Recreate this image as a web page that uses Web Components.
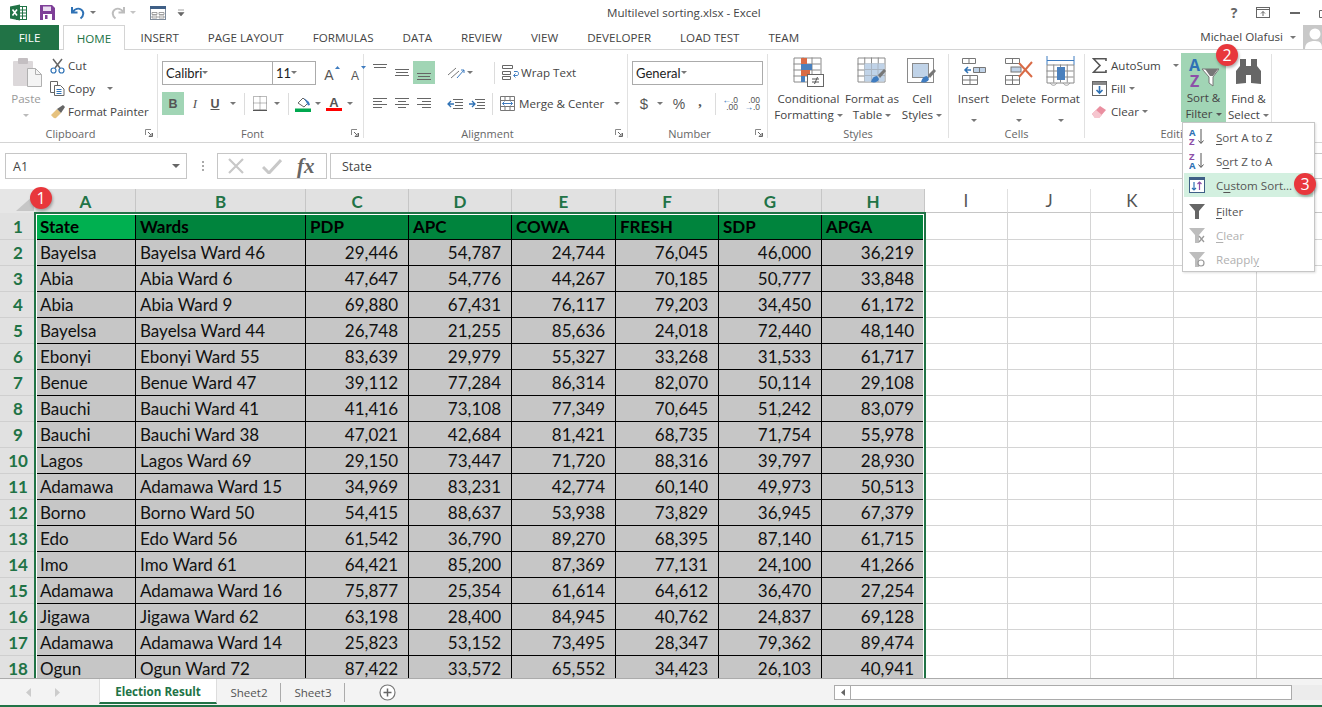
<!DOCTYPE html>
<html>
<head>
<meta charset="utf-8">
<title>Multilevel sorting.xlsx - Excel</title>
<style>
  html, body { margin: 0; padding: 0; width: 1322px; height: 707px; overflow: hidden; background: #fff; }
  body { font-family: "Open Sans", "Noto Sans", sans-serif; position: relative; }
</style>
</head>
<body>
<xl-titlebar></xl-titlebar>
<xl-tabs></xl-tabs>
<xl-ribbon></xl-ribbon>
<xl-formula></xl-formula>
<xl-sheet></xl-sheet>
<xl-sheetbar></xl-sheetbar>
<xl-sortmenu></xl-sortmenu>
<xl-step n="1" style="left:30px;top:187px"></xl-step>
<xl-step n="2" style="left:1216px;top:44px"></xl-step>
<xl-step n="3" style="left:1294px;top:173px"></xl-step>

<script>
// small helper for the inline icons
const svg = (w, h, inner, extra = '') =>
  `<svg width="${w}" height="${h}" viewBox="0 0 ${w} ${h}" style="display:block;flex:none;${extra}">${inner}</svg>`;

// title bar
class XlTitlebar extends HTMLElement {
  constructor() {
    super();
    this.attachShadow({ mode: 'open' });
    this.shadowRoot.innerHTML = `
      <style>
        :host { display: flex; align-items: center; height: 25px; position: relative; color: #444; }
        .title { position: absolute; left: 607px; top: 4px; font-size: 11.6px; line-height: 18px; color: #444; white-space: nowrap; }
        .q { display: flex; align-items: center; }
        .right { margin-left: auto; display: flex; align-items: center; }
        .c { width: 0; height: 0; border: 3px solid transparent; border-top: 3px solid #777; border-bottom: 0; }
      </style>
      <div class="q">
        <span style="width:10px"></span>
        ${svg(17, 17, `<rect x="6.5" y="2.5" width="10" height="13" fill="#fff" stroke="#217346"/>
          <path d="M10 6h6M10 9h6M10 12h6M12.5 3v12" stroke="#217346" fill="none"/>
          <path d="M0 2.5 10 .5v16L0 14.500z" fill="#217346"/>
          <path d="M2.500 5.500 7 11.500M7 5.500 2.500 11.500" stroke="#fff" stroke-width="1.600" fill="none"/>`)}
        <span style="width:13px"></span>
        ${svg(15, 15, `<path d="M0 0h12l3 3v12H0z" fill="#7e3f98"/><rect x="3" y="1.500" width="8" height="4.500" fill="#e9dcef"/><rect x="3" y="9" width="9" height="6" fill="#fff"/><rect x="5" y="10" width="2.500" height="4" fill="#7e3f98"/>`)}
        <span style="width:14px"></span>
        ${svg(16, 15, `<path d="M3 2v5.500h5.500M3.500 7C6 3.800 9.500 3 12 4.500c3.200 2 3 6.500-.5 9" fill="none" stroke="#2f72b5" stroke-width="2"/>`)}
        <span style="width:5px"></span><i class="c"></i>
        <span style="width:15px"></span>
        ${svg(16, 15, `<path d="M13 2v5.500H7.500M12.500 7C10 3.800 6.500 3 4 4.500c-3.200 2-3 6.500.5 9" fill="none" stroke="#bdbdbd" stroke-width="2"/>`)}
        <span style="width:3px"></span><i class="c" style="border-top-color:#c4c4c4"></i>
        <span style="width:14px"></span>
        ${svg(16, 14, `<rect x=".5" y=".5" width="15" height="13" fill="#fff" stroke="#7f8c9c"/><rect width="16" height="3" fill="#3f5f86"/><path d="M2 6.500h5v2H2zM2 10h5v2H2zM9 6.500h5v2H9zM9 10h5v2H9z" fill="none" stroke="#8a8a8a" stroke-width=".8"/>`)}
        <span style="width:11px"></span>
        ${svg(8, 8, `<path d="M1 1h6M1 3.500h6l-3 3.500z" fill="#666" stroke="#666" stroke-width=".6"/>`)}
      </div>
      <span class="title">Multilevel sorting.xlsx - Excel</span>
      <div class="right">
        <span style="font:bold 14px 'Open Sans',sans-serif;color:#666;width:10px;text-align:center">?</span>
        <span style="width:17px"></span>
        ${svg(14, 11, `<rect x=".5" y=".5" width="13" height="10" fill="none" stroke="#666"/><path d="M1 2.500h12" stroke="#666"/><path d="M7 9V4.500M5 6.500l2-2 2 2" fill="none" stroke="#666"/>`)}
        <span style="width:20px"></span>
        ${svg(10, 2, `<rect width="10" height="2" fill="#666"/>`)}
        <span style="width:19px"></span>
        ${svg(13, 11, `<path d="M3.500 2.500v-2h9v7h-3M.5 3.500h8v7h-8z" fill="none" stroke="#666"/>`, 'margin-right:-10px')}
      </div>`;
  }
}
customElements.define('xl-titlebar', XlTitlebar);

// ribbon tabs
class XlTabs extends HTMLElement {
  constructor() {
    super();
    this.attachShadow({ mode: 'open' });
    const names = ['INSERT', 'PAGE LAYOUT', 'FORMULAS', 'DATA', 'REVIEW', 'VIEW', 'DEVELOPER', 'LOAD TEST', 'TEAM'];
    this.shadowRoot.innerHTML = `
      <style>
        :host { display: flex; height: 25px; box-sizing: border-box; border-bottom: 1px solid #d4d4d4; font-size: 11.6px; color: #444; }
        .file { width: 59px; height: 25px; background: #217346; color: #fff; display: flex; align-items: center; justify-content: center; }
        .home { margin-left: 4px; width: 62px; height: 25px; box-sizing: border-box; border: 1px solid #d4d4d4; border-bottom: 0; background: #fff; color: #217346; display: flex; align-items: center; justify-content: center; }
        .tabs { display: flex; align-items: center; margin-left: 1px; height: 24px; }
        .tabs span { padding: 0 14.5px; white-space: nowrap; }
        .user { margin-left: auto; display: flex; align-items: center; height: 24px; padding-top: 0; }
        .user b { font-weight: 400; font-size: 11.6px; color: #444; margin-top: -1px; }
        .c { width: 0; height: 0; border: 3px solid transparent; border-top: 3px solid #777; border-bottom: 0; margin: 0 7px; }
      </style>
      <div class="file">FILE</div>
      <div class="home">HOME</div>
      <div class="tabs">${names.map(n => `<span>${n}</span>`).join('')}</div>
      <div class="user"><b>Michael Olafusi</b><i class="c"></i>
        ${svg(19, 24, `<rect width="19" height="24" fill="#c8c8c8"/><circle cx="12" cy="9" r="5.500" fill="#fff"/><path d="M2 24c0-6 4-8 10-8s7 3 7 8z" fill="#fff"/>`)}
      </div>`;
  }
}
customElements.define('xl-tabs', XlTabs);

// one labelled group of the ribbon
class XlGroup extends HTMLElement {
  constructor() {
    super();
    this.attachShadow({ mode: 'open' });
    const launcher = this.hasAttribute('launcher');
    this.shadowRoot.innerHTML = `
      <style>
        :host { display: block; height: 84px; box-sizing: border-box; border-right: 1px solid #e1e1e1; flex: none; }
        .body { height: 74px; display: flex; }
        .label { height: 10px; line-height: 12px; display: flex; font-size: 11px; color: #666; }
        .label span { flex: 1; text-align: center; }
        .label i { width: 16px; display: flex; align-items: center; justify-content: flex-start; padding-left: 4px; box-sizing: border-box; }
      </style>
      <div class="body"><slot></slot></div>
      <div class="label"><span>${this.getAttribute('label')}</span>
        ${launcher ? `<i>${svg(8, 8, `<path d="M.5 6V.5H6" fill="none" stroke="#888"/><path d="M3 3l3.500 3.500M7.500 4v3.500H4z" fill="none" stroke="#666"/>`)}</i>` : ''}
      </div>`;
  }
}
customElements.define('xl-group', XlGroup);

// the HOME ribbon
class XlRibbon extends HTMLElement {
  constructor() {
    super();
    this.attachShadow({ mode: 'open' });
    const c = (m = 0, col = '#777') => `<i class="c" style="margin-left:${m}px;border-top-color:${col}"></i>`;
    const sp = w => `<span style="width:${w}px;flex:none"></span>`;
    const sep = h => `<span class="sep" style="height:${h}px"></span>`;
    const lines = (xs) => xs.map(([x1, x2, y]) => `M${x1} ${y}H${x2}`).join('');
    const strokes = (d, col = '#666') => `<path d="${d}" stroke="${col}" fill="none"/>`;
    const tbl = (x, y, w, h, cols, rows, col = '#8a8a8a') => {
      let d = `M${x + .5} ${y + .5}h${w}v${h}h${-w}z`;
      for (let i = 1; i < cols; i++) d += `M${x + .5 + i * w / cols} ${y}v${h}`;
      for (let i = 1; i < rows; i++) d += `M${x} ${y + .5 + i * h / rows}h${w}`;
      return `<path d="${d}" stroke="${col}" fill="#fff"/>`;
    };
    const brush = (x, y) => `<path d="M${x} ${y + 13}c1-4 3-6 6-6l2 3c-1 3-4 4-8 3z" fill="#3f7cc0"/><path d="M${x + 7} ${y + 6}l6-6 2 2-6 7z" fill="#777"/>`;

    this.shadowRoot.innerHTML = `
      <style>
        :host { display: flex; height: 93px; box-sizing: border-box; border-bottom: 1px solid #d4d4d4; padding-top: 4px; font-size: 11.6px; color: #444; background: #fff; }
        .c { display: block; flex: none; width: 0; height: 0; border: 3px solid transparent; border-top: 3px solid #777; border-bottom: 0; }
        .col { display: flex; flex-direction: column; }
        .row { display: flex; align-items: center; height: 23px; white-space: nowrap; }
        .gap8 { row-gap: 8px; padding-top: 7px; }
        .sep { width: 1px; background: #dcdcdc; flex: none; }
        .big { display: flex; flex-direction: column; align-items: center; box-sizing: border-box; flex: none; }
        .big .ic { height: 37px; display: flex; align-items: flex-start; justify-content: center; padding-top: 3px; box-sizing: border-box; }
        .big .t { height: 16px; line-height: 16px; display: flex; align-items: center; gap: 3px; white-space: nowrap; }
        .sel { display: flex; align-items: center; box-sizing: border-box; border: 1px solid #ababab; height: 24px; font: 13px Lato, "Liberation Sans", sans-serif; color: #222; padding-left: 3px; background: #fff; }
        .sel .c { margin-left: auto; margin-right: 6px; }
        .on { background: #a1d5b5; }
        .tb { display: flex; align-items: center; justify-content: center; height: 23px; flex: none; }
        .fmt { font-family: "Liberation Sans", sans-serif; color: #555; }
      </style>

      <xl-group label="Clipboard" launcher style="width:158px">
        <div class="big" style="width:50px;color:#9a9a9a;">
          <div class="ic" style="height:36px;padding-left:4px">${svg(29, 30, `
            <rect x="0" y="4" width="20" height="25" rx="1" fill="#dcd8da"/><rect x="5" y="1" width="10" height="6" rx="1" fill="#c4bfc2"/>
            <path d="M14.500 11.500h8l6 6v12h-14z" fill="#f4f4f4" stroke="#b0b0b0"/><path d="M22.500 11.500v6h6" fill="none" stroke="#b0b0b0"/>`)}</div>
          <div class="t" style="height:17px;margin-left:2px">Paste</div>
          <div class="tb" style="height:16px;margin-left:2px">${c(0, '#bbb')}</div>
        </div>
        <div class="col">
          <div class="row">${svg(15, 16, `<path d="M3 1l7 9M12 1 5 10" stroke="#666" stroke-width="1.500" fill="none"/><circle cx="3.500" cy="12.500" r="2.500" fill="none" stroke="#2f72b5" stroke-width="1.200"/><circle cx="11.500" cy="12.500" r="2.500" fill="none" stroke="#2f72b5" stroke-width="1.200"/>`)}${sp(3)}Cut</div>
          <div class="row">${svg(15, 15, `<path d="M.5.500h7v11h-7z" fill="#fff" stroke="#666"/><path d="M4.500 4.500h6l3.500 3.500v6.500H4.500z" fill="#fff" stroke="#666"/><path d="M6.500 8.500h5M6.500 10.500h5M6.500 12.500h5" stroke="#2f72b5"/>`)}${sp(3)}Copy${c(12)}</div>
          <div class="row">${svg(16, 14, `<path d="M1 10l6-6 4 4-5 5c-2 1-3-1-5-3z" fill="#e6c27f"/><path d="M7 4l4 4 4-6-2-2z" fill="#666"/>`)}${sp(2)}Format Painter</div>
        </div>
      </xl-group>

      <xl-group label="Font" launcher style="width:206px">
        <div class="col gap8" style="padding-left:4px">
          <div class="row">
            <div class="sel" style="width:111px">Calibri${c()}</div>
            <div class="sel" style="width:43px;margin-left:-1px;width:44px">11${c()}</div>
            ${sp(6)}<span class="tb fmt" style="width:14px;font-size:14px;align-items:flex-end;height:20px">A</span>
            ${svg(5, 3, `<path d="M0 3l2.500-3L5 3z" fill="#3f7cc0"/>`, 'margin:-10px 0 0 -1px')}
            ${sp(9)}<span class="tb fmt" style="width:12px;font-size:12px;align-items:flex-end;height:20px">A</span>
            ${svg(5, 3, `<path d="M0 0l2.500 3L5 0z" fill="#3f7cc0"/>`, 'margin:-10px 0 0 0')}
          </div>
          <div class="row">
            <span class="tb on fmt" style="width:22px;font-weight:700;font-size:12.500px">B</span>
            ${sp(3)}<span class="tb fmt" style="width:16px;font:italic 13px 'Liberation Serif',serif;">I</span>
            ${sp(3)}<span class="tb fmt" style="width:18px;font-size:12.500px;font-weight:700;text-decoration:underline">U</span>
            ${c(6)}${sp(8)}${sep(22)}${sp(8)}
            ${svg(15, 15, `<path d="M.5.500h13v13H.5zM7 .5v13M.5 7h13" fill="none" stroke="#777" stroke-dasharray="1 1"/><path d="M0 14.500h14" stroke="#555"/>`)}
            ${c(6)}${sp(8)}${sep(22)}${sp(6)}
            ${svg(17, 16, `<path d="M3 7l5-5 5 5-4 4z" fill="#fff" stroke="#666"/><path d="M9 2l5 4 1 3-2 .5z" fill="#3f7cc0"/><rect y="12.500" width="16" height="3.500" fill="#00a84f"/>`)}
            ${c(3)}${sp(5)}
            <span style="display:flex;flex-direction:column;align-items:center;width:16px;flex:none"><span class="fmt" style="font-size:13px;font-weight:700;line-height:13px;height:12px">A</span><span style="display:block;width:16px;height:3.500px;background:#f00"></span></span>
            ${c(5)}
          </div>
        </div>
      </xl-group>

      <xl-group label="Alignment" launcher style="width:264px">
        <div class="col gap8" style="padding-left:9px">
          <div class="row">
            ${svg(14, 10, strokes(lines([[0, 14, .5], [1, 13, 3.5]])), 'margin-bottom:7px')}${sp(8)}
            ${svg(14, 8, strokes(lines([[0, 14, .5], [1, 13, 3.5], [0, 14, 6.5]])))}${sp(4)}
            <span class="tb on" style="width:22px;align-items:flex-end;padding-bottom:3px;box-sizing:border-box">${svg(14, 8, strokes(lines([[0, 14, .5], [1, 13, 3.5], [0, 14, 6.5]])))}</span>
            ${sp(12)}${svg(18, 16, `<path d="M1 10l8-7M4 13l8-7" stroke="#777" fill="none"/><path d="M10 13l7-8M14 5h3v3" stroke="#3f7cc0" fill="none"/>`)}
            ${c(2)}${sp(21)}${sep(22)}${sp(7)}
            ${svg(17, 15, `<path d="M.5.500h10v3h-10zM.5 6.500h8v3h-8zM.5 11.500h8v3h-8z" fill="none" stroke="#666"/><path d="M12 6.500h3c2 0 2 4 0 4h-3M13.500 8.500 11.500 10.500l2 2" fill="none" stroke="#3f7cc0"/>`)}
            ${sp(2)}Wrap Text
          </div>
          <div class="row">
            ${svg(14, 11, strokes(lines([[0, 14, .5], [0, 9, 3.5], [0, 14, 6.5], [0, 9, 9.5]])))}${sp(8)}
            ${svg(14, 11, strokes(lines([[0, 14, .5], [3, 11, 3.5], [0, 14, 6.5], [3, 11, 9.5]])))}${sp(8)}
            ${svg(14, 11, strokes(lines([[0, 14, .5], [5, 14, 3.5], [0, 14, 6.5], [5, 14, 9.5]])))}${sp(16)}
            ${svg(16, 10, strokes(lines([[6, 16, .5], [8, 16, 3.5], [8, 16, 6.5], [6, 16, 9.5]])) + `<path d="M7 5H1M4 2 1 5l3 3" fill="none" stroke="#2f72b5" stroke-width="1.300"/>`)}${sp(6)}
            ${svg(16, 10, strokes(lines([[6, 16, .5], [8, 16, 3.5], [8, 16, 6.5], [6, 16, 9.5]])) + `<path d="M0 5h6M3 2l3 3-3 3" fill="none" stroke="#2f72b5" stroke-width="1.300"/>`)}
            ${sp(7)}${sep(22)}${sp(7)}
            ${svg(15, 15, `<path d="M.5.500h14v14H.5zM.5 4.500h14M.5 10.500h14M5 .5v4M10 .5v4M5 10.500v4M10 10.500v4" fill="none" stroke="#777"/><path d="M2.500 7.500h10M4.500 5.500l-2 2 2 2M10.500 5.500l2 2-2 2" fill="none" stroke="#3f7cc0"/>`)}
            ${sp(4)}Merge &amp; Center${c(10)}
          </div>
        </div>
      </xl-group>

      <xl-group label="Number" launcher style="width:140px">
        <div class="col gap8" style="padding-left:4px">
          <div class="row"><div class="sel" style="width:131px">General${c()}</div></div>
          <div class="row">
            ${sp(7)}<span class="tb fmt" style="width:10px;font-size:15px;">$</span>${c(8)}${sp(9)}
            <span class="tb fmt" style="width:14px;font-size:14px;">%</span>${sp(10)}
            <span class="tb fmt" style="width:8px;font:bold 14px 'Liberation Serif',serif;margin-top:-4px">,</span>${sp(11)}${sep(22)}${sp(7)}
            <span class="col" style="width:15px;font:8.500px/7px 'Liberation Sans',sans-serif;color:#555;align-items:flex-end"><span><b style="color:#2f72b5">←</b>.0</span><span>.00</span></span>${sp(7)}
            <span class="col" style="width:15px;font:8.500px/7px 'Liberation Sans',sans-serif;color:#555;align-items:flex-end"><span>.00</span><span><b style="color:#2f72b5">→</b>.0</span></span>
          </div>
        </div>
      </xl-group>

      <xl-group label="Styles" style="width:181px">
        <div class="big" style="width:81px;margin-left:0">
          <div class="ic">${svg(31, 30, tbl(.5, .5, 27, 24, 3, 4) + `<rect x="8" y="1" width="6" height="6" fill="#d96b46"/><rect x="8" y="7" width="11" height="6" fill="#4a80bd"/><rect x="8" y="13" width="9" height="6" fill="#d96b46"/><rect x="8" y="19" width="4" height="6" fill="#4a80bd"/><rect x="14.500" y="17.500" width="16" height="12" fill="#fff" stroke="#666"/><path d="M19 22h7M19 25h7M24.500 20l-3 7" stroke="#555" fill="none"/>`)}</div>
          <div class="t">Conditional</div><div class="t">Formatting${c(0)}</div>
        </div>
        <div class="big" style="width:46px">
          <div class="ic">${svg(31, 30, tbl(.5, .5, 27, 24, 4, 4) + `<rect x="7.500" y="6.500" width="20" height="18" fill="#c0d3e8"/><path d="M8 12.500h20M8 18.500h20M14.500 7v18M21 7v18" stroke="#8a8a8a" opacity=".4"/>` + brush(14, 12))}</div>
          <div class="t">Format as</div><div class="t">Table${c(0)}</div>
        </div>
        <div class="big" style="width:54px">
          <div class="ic">${svg(30, 30, `<rect x=".5" y="1.500" width="26" height="24" fill="#fff" stroke="#8a8a8a"/><rect x="5.500" y="6.500" width="16" height="14" fill="#c0d3e8" stroke="#8a8a8a"/>` + brush(14, 12))}</div>
          <div class="t">Cell</div><div class="t">Styles${c(0)}</div>
        </div>
      </xl-group>

      <xl-group label="Cells" style="width:136px">
        <div class="big" style="width:49px">
          <div class="ic">${svg(26, 28, `<path d="M1 1h13v5H1zM7.500 1v5M1 18h15v9H1zM8.500 18v9M1 22.500h15" transform="translate(.5 .5)" fill="#fff" stroke="#777"/><path d="M12 10h12v5H12zM18 10v5" transform="translate(.5 .5)" fill="#c0d3e8" stroke="#777"/><path d="M10 13H4M7 10l-3 3 3 3" fill="none" stroke="#2f72b5" stroke-width="1.500"/>`)}</div>
          <div class="t">Insert</div><div class="t" style="margin-top:5px">${c(0)}</div>
        </div>
        <div class="big" style="width:41px">
          <div class="ic">${svg(30, 28, `<path d="M1 1h14v5H1zM8 1v5M1 18h14v9H1zM8 18v9M1 22.500h14" transform="translate(.5 .5)" fill="#fff" stroke="#777"/><rect x="7" y="10" width="10" height="5" fill="#c0d3e8" stroke="#777"/><path d="M15 6l13 14M28 5 15 20" stroke="#d96b46" stroke-width="2" fill="none"/>`)}</div>
          <div class="t">Delete</div><div class="t" style="margin-top:5px">${c(0)}</div>
        </div>
        <div class="big" style="width:43px">
          <div class="ic" style="padding-top:2px">${svg(29, 31, `<path d="M1 5.500h27M3.500 5.500h9M1 1v9M28 1v9" transform="translate(0 -1)" stroke="#3f7cc0" fill="none"/>` + tbl(.5, 8.500, 27, 18, 4, 3) + `<rect x="11" y="11" width="8" height="13" fill="#4a80bd"/><path d="M4 27c2 3 5 3 7 0M17 27c2 3 5 3 7 0" fill="none" stroke="#999"/>`)}</div>
          <div class="t">Format</div><div class="t" style="margin-top:5px">${c(0)}</div>
        </div>
      </xl-group>

      <xl-group label="Editing" style="width:187px">
        <div class="col" style="padding-left:7px;width:96px">
          <div class="row">${svg(15, 15, `<path d="M14 3V.7H1.500L8 7.500 1.500 14.300H14V12" fill="none" stroke="#555" stroke-width="1.600"/>`)}${sp(4)}AutoSum${c(12)}</div>
          <div class="row">${svg(15, 15, `<rect x=".5" y=".5" width="14" height="14" fill="#fff" stroke="#666"/><rect x="1" y="1" width="13" height="3" fill="#888"/><path d="M7.500 5v7M4.500 9l3 3 3-3" fill="none" stroke="#2f72b5" stroke-width="1.600"/>`)}${sp(4)}Fill${c(3)}</div>
          <div class="row">${svg(15, 14, `<path d="M0 9l8-8 6 4-7 8H3z" fill="#ea8fa0"/><path d="M0 9l4-4 6 5-3 3H3z" fill="#f6c6cf"/>`)}${sp(4)}Clear${c(3)}</div>
        </div>
        <div class="big on" style="width:45px;height:69px;margin-top:-1px;padding-left:0">
          <div class="ic" style="height:38px;padding-top:3px">${svg(31, 33, `<text x="1" y="15" font-family="Open Sans,sans-serif" font-size="16" font-weight="700" fill="#2f72b5">A</text><text x="2" y="31" font-family="Open Sans,sans-serif" font-size="16" font-weight="700" fill="#8d4fa8">Z</text><path d="M14 13h17l-6 8v9l-4-3v-6z" fill="#fff" stroke="#777"/><path d="M17 13h13l-5 7h-3z" fill="#777"/>`)}</div>
          <div class="t">Sort &amp;</div><div class="t">Filter${c(0, '#555')}</div>
        </div>
        <div class="big" style="width:45px">
          <div class="ic" style="padding-top:2px">${svg(27, 32, `<path d="M1 28V15l4-5V3h6v24zM26 28V15l-4-5V3h-6v24z" fill="#666"/><rect x="10" y="10" width="7" height="9" fill="#666"/>`)}</div>
          <div class="t">Find &amp;</div><div class="t">Select${c(0)}</div>
        </div>
      </xl-group>`;
  }
}
customElements.define('xl-ribbon', XlRibbon);

// name box and formula bar
class XlFormula extends HTMLElement {
  constructor() {
    super();
    this.attachShadow({ mode: 'open' });
    this.shadowRoot.innerHTML = `
      <style>
        :host { display: flex; height: 46px; box-sizing: border-box; padding: 10px 0 10px 5px; font-size: 12.500px; color: #444; }
        .box { box-sizing: border-box; height: 26px; border: 1px solid #c6c6c6; display: flex; align-items: center; background: #fff; }
        .name { width: 182px; padding-left: 7px; }
        .c { width: 0; height: 0; border: 4px solid transparent; border-top: 4px solid #666; border-bottom: 0; margin-left: auto; margin-right: 6px; }
        .dots { width: 30px; display: flex; justify-content: center; }
        .btns { width: 110px; }
        .val { flex: 1; margin-left: 3px; margin-right: -2px; padding-left: 11px; }
      </style>
      <div class="box name">A1<i class="c"></i></div>
      <div class="dots">${svg(3, 10, `<path d="M1 0h2v2H1zM1 4h2v2H1zM1 8h2v2H1z" fill="#aaa"/>`, 'margin-top:8px')}</div>
      <div class="box btns">
        <span style="width:9px"></span>
        ${svg(18, 16, `<path d="M2 1l14 14M16 1 2 15" stroke="#c8c8c8" stroke-width="2.200" fill="none"/>`)}
        <span style="width:17px"></span>
        ${svg(20, 16, `<path d="M1 9l6 6L19 2" stroke="#c8c8c8" stroke-width="3" fill="none"/>`)}
        <span style="width:15px"></span>
        <span style="font:italic 700 21px 'Liberation Serif',serif;color:#666;line-height:24px;">fx</span>
      </div>
      <div class="box val">State</div>`;
  }
}
customElements.define('xl-formula', XlFormula);

// worksheet grid
const SHEET_ROWS = [
  ['Bayelsa','Bayelsa Ward 46','29,446','54,787','24,744','76,045','46,000','36,219'],
  ['Abia','Abia Ward 6','47,647','54,776','44,267','70,185','50,777','33,848'],
  ['Abia','Abia Ward 9','69,880','67,431','76,117','79,203','34,450','61,172'],
  ['Bayelsa','Bayelsa Ward 44','26,748','21,255','85,636','24,018','72,440','48,140'],
  ['Ebonyi','Ebonyi Ward 55','83,639','29,979','55,327','33,268','31,533','61,717'],
  ['Benue','Benue Ward 47','39,112','77,284','86,314','82,070','50,114','29,108'],
  ['Bauchi','Bauchi Ward 41','41,416','73,108','77,349','70,645','51,242','83,079'],
  ['Bauchi','Bauchi Ward 38','47,021','42,684','81,421','68,735','71,754','55,978'],
  ['Lagos','Lagos Ward 69','29,150','73,447','71,720','88,316','39,797','28,930'],
  ['Adamawa','Adamawa Ward 15','34,969','83,231','42,774','60,140','49,973','50,513'],
  ['Borno','Borno Ward 50','54,415','88,637','53,938','73,829','36,945','67,379'],
  ['Edo','Edo Ward 56','61,542','36,790','89,270','68,395','87,140','61,715'],
  ['Imo','Imo Ward 61','64,421','85,200','87,369','77,131','24,100','41,266'],
  ['Adamawa','Adamawa Ward 16','75,877','25,354','61,614','64,612','36,470','27,254'],
  ['Jigawa','Jigawa Ward 62','63,198','28,400','84,945','40,762','24,837','69,128'],
  ['Adamawa','Adamawa Ward 14','25,823','53,152','73,495','28,347','79,362','89,474'],
  ['Ogun','Ogun Ward 72','87,422','33,572','65,552','34,423','26,103','40,941']
];
const SHEET_HEAD = ['State','Wards','PDP','APC','COWA','FRESH','SDP','APGA'];

class XlSheet extends HTMLElement {
  constructor() {
    super();
    this.attachShadow({ mode: 'open' });
    const letters = 'ABCDEFGHIJKLM'.split('');
    let html = `<div class="corner">${svg(36, 24, `<path d="M34 6v16H16z" fill="#c6c6c6"/>`)}</div>`;
    letters.forEach((l, i) => { html += `<div class="ch ${i < 8 ? 'on' : ''}">${l}</div>`; });
    html += `<div class="rh">1</div>`;
    SHEET_HEAD.forEach((t, i) => { html += `<div class="d head ${i === 0 ? 'a1' : ''}">${t}</div>`; });
    for (let i = 0; i < 5; i++) html += `<div class="e"></div>`;
    SHEET_ROWS.forEach((r, n) => {
      html += `<div class="rh">${n + 2}</div>`;
      r.forEach((t, i) => { html += `<div class="d ${i > 1 ? 'num' : ''}">${t}</div>`; });
      for (let i = 0; i < 5; i++) html += `<div class="e"></div>`;
    });
    this.shadowRoot.innerHTML = `
      <style>
        :host { display: block; height: 489px; overflow: hidden; position: relative; background: #fff; }
        .grid { display: grid; grid-template-columns: 36px 100px 170px 103px 103px 104px 103px 103px 103px 83px 83px 83px 83px 83px; grid-template-rows: 24px 27px; grid-auto-rows: 26px; font: 17px Lato, "Liberation Sans", sans-serif; color: #111; }
        .corner { background: #e6e6e6; border-right: 0; }
        .ch { background: #fff; border-right: 1px solid #e0e0e0; border-bottom: 1px solid #c6c6c6; color: #555; display: flex; align-items: center; justify-content: center; box-sizing: border-box; }
        .ch.on { background: #e1e1e1; border-right-color: #c6c6c6; border-bottom: 0; color: #217346; font-weight: 700; }
        .rh { background: #e1e1e1; border-bottom: 1px solid #cfcfcf; color: #217346; font-weight: 700; display: flex; align-items: center; justify-content: center; box-sizing: border-box; }
        .d { background: #c6c6c6; border-right: 1px solid #000; border-bottom: 1px solid #000; box-sizing: border-box; padding-left: 4px; display: flex; align-items: center; white-space: nowrap; overflow: hidden; }
        .num { justify-content: flex-end; padding: 0 10px 0 0; }
        .head { background: #00843d; font-weight: 700; color: #000; }
        .a1 { background: #00b050; }
        .e { border-right: 1px solid #d4d4d4; border-bottom: 1px solid #d4d4d4; box-sizing: border-box; }
        .range { position: absolute; left: 34px; top: 23px; width: 892px; height: 480px; box-sizing: border-box; border: 2px solid #217346; outline: 1px solid #fff; outline-offset: -3px; }
      </style>
      <div class="grid">${html}</div>
      <div class="range"></div>`;
  }
}
customElements.define('xl-sheet', XlSheet);

// sheet tabs and horizontal scroll bar
class XlSheetbar extends HTMLElement {
  constructor() {
    super();
    this.attachShadow({ mode: 'open' });
    this.shadowRoot.innerHTML = `
      <style>
        :host { display: flex; align-items: stretch; height: 29px; box-sizing: border-box; background: #f3f3f3; border-top: 1px solid #ababab; border-bottom: 2px solid #217346; font-size: 11.6px; color: #555; }
        .nav { width: 100px; display: flex; align-items: center; padding-left: 26px; box-sizing: border-box; }
        .tab { display: flex; align-items: center; justify-content: center; }
        .cur { width: 116px; margin-top: 0; height: 24px; background: #fff; border-bottom: 2px solid #217346; color: #217346; font-weight: 700; box-sizing: content-box; height: 22px; padding-top: 1px; border-left: 1px solid #ddd; border-right: 1px solid #ddd; margin-left: -1px; }
        .s { width: 64px; position: relative; }
        .s::after { content: ""; position: absolute; right: 0; top: 4px; height: 19px; width: 1px; background: #ababab; }
        .add { width: 84px; display: flex; align-items: center; justify-content: center; }
        .fill { width: 392px; }
        .sb { display: flex; align-items: center; flex: 1; }
        .track { box-sizing: border-box; height: 15px; width: 458px; border: 1px solid #ababab; background: #fff; display: flex; }
        .l { width: 15px; border-right: 1px solid #ababab; display: flex; align-items: center; justify-content: center; }
        .rest { flex: 1; height: 15px; background: #ececec; }
      </style>
      <div class="nav">
        ${svg(5, 9, `<path d="M5 0v9L0 4.500z" fill="#ccc"/>`)}<span style="width:24px"></span>${svg(5, 9, `<path d="M0 0v9l5-4.500z" fill="#ccc"/>`)}
      </div>
      <div class="tab cur">Election Result</div>
      <div class="tab s">Sheet2</div>
      <div class="tab s">Sheet3</div>
      <div class="add">${svg(17, 17, `<circle cx="8.500" cy="8.500" r="7.500" fill="#fff" stroke="#777" stroke-width="1.200"/><path d="M8.500 4.500v8M4.500 8.500h8" stroke="#666" stroke-width="1.500"/>`)}</div>
      <div class="sb" style="margin-left:405px">
        <div class="track"><span class="l">${svg(4, 7, `<path d="M4 0v7L0 3.500z" fill="#666"/>`)}</span></div>
        <div class="rest"></div>
      </div>`;
  }
}
customElements.define('xl-sheetbar', XlSheetbar);

// Sort & Filter dropdown
class XlSortmenu extends HTMLElement {
  constructor() {
    super();
    this.attachShadow({ mode: 'open' });
    const az = (a, b, ca, cb, col = '#555') => svg(16, 18,
      `<text x="0" y="8" font-family="Open Sans,sans-serif" font-size="9.500" font-weight="700" fill="${ca}">${a}</text><text x="0" y="17" font-family="Open Sans,sans-serif" font-size="9.500" font-weight="700" fill="${cb}">${b}</text><path d="M12 1v14M9.500 12.500l2.500 3 2.500-3" fill="none" stroke="${col}"/>`);
    const funnel = (col) => `<path d="M0 1h16l-6 7v8H6V8z" fill="${col}"/>`;
    this.shadowRoot.innerHTML = `
      <style>
        :host { position: absolute; left: 1182px; top: 122px; width: 133px; height: 150px; box-sizing: border-box; background: #fff; border: 1px solid #c6c6c6; box-shadow: 1px 1px 2px rgba(0,0,0,.12); padding: 1px; font-size: 11.6px; color: #555; }
        .i { display: flex; align-items: center; height: 24px; padding-left: 5px; white-space: nowrap; }
        .i .ic { width: 27px; flex: none; }
        .hot { background: #d3f0e0; margin-right: 0; }
        .off { color: #b1b1b1; }
        .m { height: 2px; }
        u { text-underline-offset: 2px; }
      </style>
      <div style="height:1px"></div>
      <div class="i"><span class="ic">${az('A', 'Z', '#2f72b5', '#8d4fa8')}</span><span><u>S</u>ort A to Z</span></div>
      <div class="i"><span class="ic">${az('Z', 'A', '#8d4fa8', '#2f72b5')}</span><span>S<u>o</u>rt Z to A</span></div>
      <div class="i hot"><span class="ic">${svg(16, 16, `<rect x=".5" y=".5" width="15" height="15" fill="#fff" stroke="#3f5f86"/><rect width="16" height="3" fill="#3f5f86"/><path d="M5 5v8M3 11l2 2 2-2" fill="none" stroke="#2f72b5" stroke-width="1.200"/><path d="M10.500 13V5M8.500 7l2-2 2 2" fill="none" stroke="#8d4fa8" stroke-width="1.200"/>`)}</span><span>C<u>u</u>stom Sort...</span></div>
      <div class="m"></div>
      <div class="i"><span class="ic">${svg(16, 16, funnel('#666'))}</span><span><u>F</u>ilter</span></div>
      <div class="i off"><span class="ic">${svg(16, 16, funnel('#bdbdbd') + `<path d="M10 9l5 6M15 9l-5 6" stroke="#9a9a9a" stroke-width="1.300"/>`)}</span><span><u>C</u>lear</span></div>
      <div class="i off"><span class="ic">${svg(16, 16, funnel('#bdbdbd') + `<circle cx="12" cy="12" r="3" fill="#fff" stroke="#9a9a9a" stroke-width="1.200"/>`)}</span><span>Reappl<u>y</u></span></div>`;
  }
}
customElements.define('xl-sortmenu', XlSortmenu);

// numbered red callout
class XlStep extends HTMLElement {
  constructor() {
    super();
    this.attachShadow({ mode: 'open' });
    this.shadowRoot.innerHTML = `
      <style>
        :host { position: absolute; width: 22px; height: 22px; border-radius: 50%; background: #e8373c; color: #fff; font: 16px/22px "Open Sans", sans-serif; text-align: center; box-shadow: 1px 2px 3px rgba(0,0,0,.3); }
      </style>${this.getAttribute('n')}`;
  }
}
customElements.define('xl-step', XlStep);
</script>
</body>
</html>
